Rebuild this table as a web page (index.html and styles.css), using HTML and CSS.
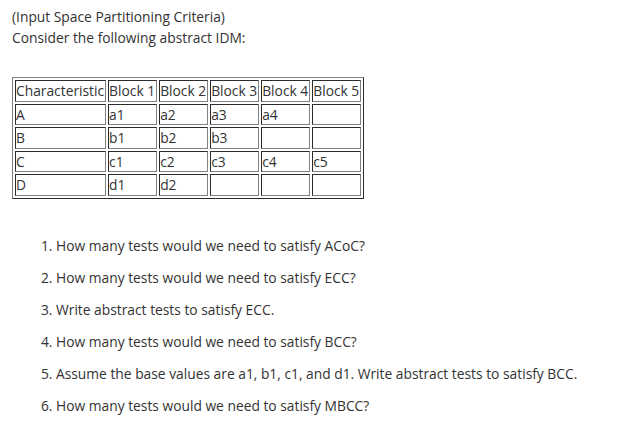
FILE: index.html
```html
<!DOCTYPE html>
<html>
<head>
<meta charset="utf-8">
<link rel="stylesheet" href="styles.css">
</head>
<body>
<p class="line">(Input Space Partitioning Criteria)</p>
<p class="line">Consider the following abstract IDM:</p>
<table class="idm">
  <tr><td>Characteristic</td><td>Block 1</td><td>Block 2</td><td>Block 3</td><td>Block 4</td><td>Block 5</td></tr>
  <tr><td>A</td><td>a1</td><td>a2</td><td>a3</td><td>a4</td><td></td></tr>
  <tr><td>B</td><td>b1</td><td>b2</td><td>b3</td><td></td><td></td></tr>
  <tr><td>C</td><td>c1</td><td>c2</td><td>c3</td><td>c4</td><td>c5</td></tr>
  <tr><td>D</td><td>d1</td><td>d2</td><td></td><td></td><td></td></tr>
</table>
<ol class="questions">
  <li>How many tests would we need to satisfy ACoC?</li>
  <li>How many tests would we need to satisfy ECC?</li>
  <li>Write abstract tests to satisfy ECC.</li>
  <li>How many tests would we need to satisfy BCC?</li>
  <li>Assume the base values are a1, b1, c1, and d1. Write abstract tests to satisfy BCC.</li>
  <li>How many tests would we need to satisfy MBCC?</li>
</ol>
</body>
</html>
```
FILE: styles.css
```css
html, body {
  background: #ffffff;
}
body {
  margin: 0;
  padding: 6px 12px 0 12px;
  font-family: "Open Sans", "Liberation Sans", sans-serif;
  font-size: 13.8px;
  color: #333333;
}
.line {
  margin: 0;
  line-height: 21px;
}
.idm {
  margin-top: 29px;
  border: 1px outset #808080;
  border-spacing: 2px;
  font-size: 13.8px;
}
.idm td {
  border: 1px inset #808080;
  padding: 0 1px 0 0;
  line-height: 19.6px;
  height: 19.6px;
  white-space: nowrap;
  color: #333333;
}
.idm td:first-child {
  min-width: 88px;
}
.idm td:not(:first-child) {
  min-width: 46px;
}
.questions {
  margin: 37px 0 0 0;
  padding-left: 44px;
}
.questions li {
  line-height: 20px;
  margin-bottom: 12px;
}
```
